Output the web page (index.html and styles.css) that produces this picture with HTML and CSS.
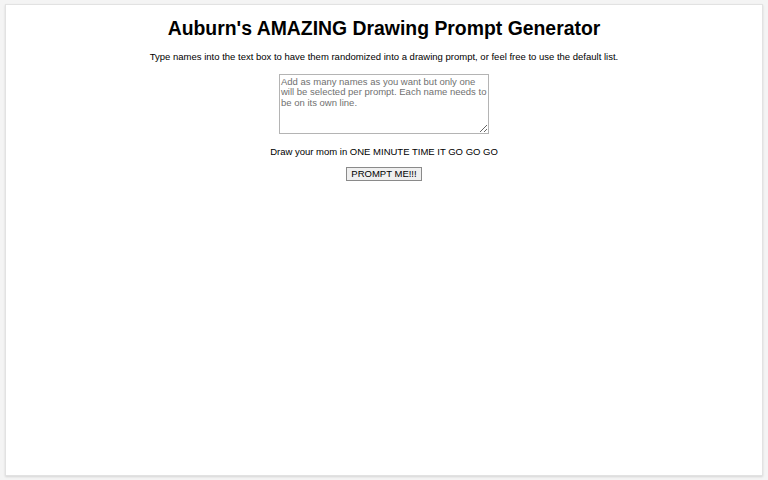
FILE: index.html
```html
<!DOCTYPE html>
<html lang="en">

<head>
  <meta charset="UTF-8">
  <meta name="viewport" content="width=device-width, initial-scale=1.0">
  <title>Drawing Prompt Generator</title>
  <link rel="stylesheet" href="styles.css">
</head>

<body>
  <main class="card">
    <h1>Auburn's AMAZING Drawing Prompt Generator</h1>
    <p class="intro">Type names into the text box to have them randomized into a drawing prompt, or feel free to use the default list.</p>
    <textarea class="names" placeholder="Add as many names as you want but only one will be selected per prompt. Each name needs to be on its own line."></textarea>
    <p class="prompt">Draw your mom in ONE MINUTE TIME IT GO GO GO</p>
    <button class="go">PROMPT ME!!!</button>
  </main>
</body>

</html>
```

FILE: styles.css
```css
html,
body {
  height: 100%;
}

body {
  background: #f4f4f4;
  box-sizing: border-box;
  font-family: "Liberation Sans", Arial, sans-serif;
  margin: 0;
  padding: 4px 5px;
}

.card {
  align-items: center;
  background: #fff;
  border: 1px solid #e2e2e2;
  box-shadow: 0 1px 2px rgba(0, 0, 0, 0.12);
  box-sizing: border-box;
  display: flex;
  flex-direction: column;
  height: 100%;
  padding-top: 12px;

  h1 {
    font-size: 19.4px;
    line-height: 22px;
    margin: 0 0 12px;
  }

  p {
    font-size: 9.5px;
    line-height: 11px;
    margin: 0;
  }

  .intro {
    margin-bottom: 11.5px;
  }

  .names {
    border: 1px solid #b4b4b4;
    box-sizing: border-box;
    font-family: "Liberation Sans", Arial, sans-serif;
    font-size: 9.5px;
    height: 60px;
    line-height: 10.5px;
    margin: 0 0 12.5px;
    padding: 2px 1px 1px;
    width: 210px;

    &::placeholder {
      color: #707070;
    }
  }

  .prompt {
    margin-bottom: 9.5px;
  }

  .go {
    background: #efefef;
    border: 1px solid #8a8a8a;
    color: #000;
    font-family: "Liberation Sans", Arial, sans-serif;
    font-size: 9.5px;
    height: 14px;
    line-height: 12px;
    padding: 0 4px;
  }
}
```
